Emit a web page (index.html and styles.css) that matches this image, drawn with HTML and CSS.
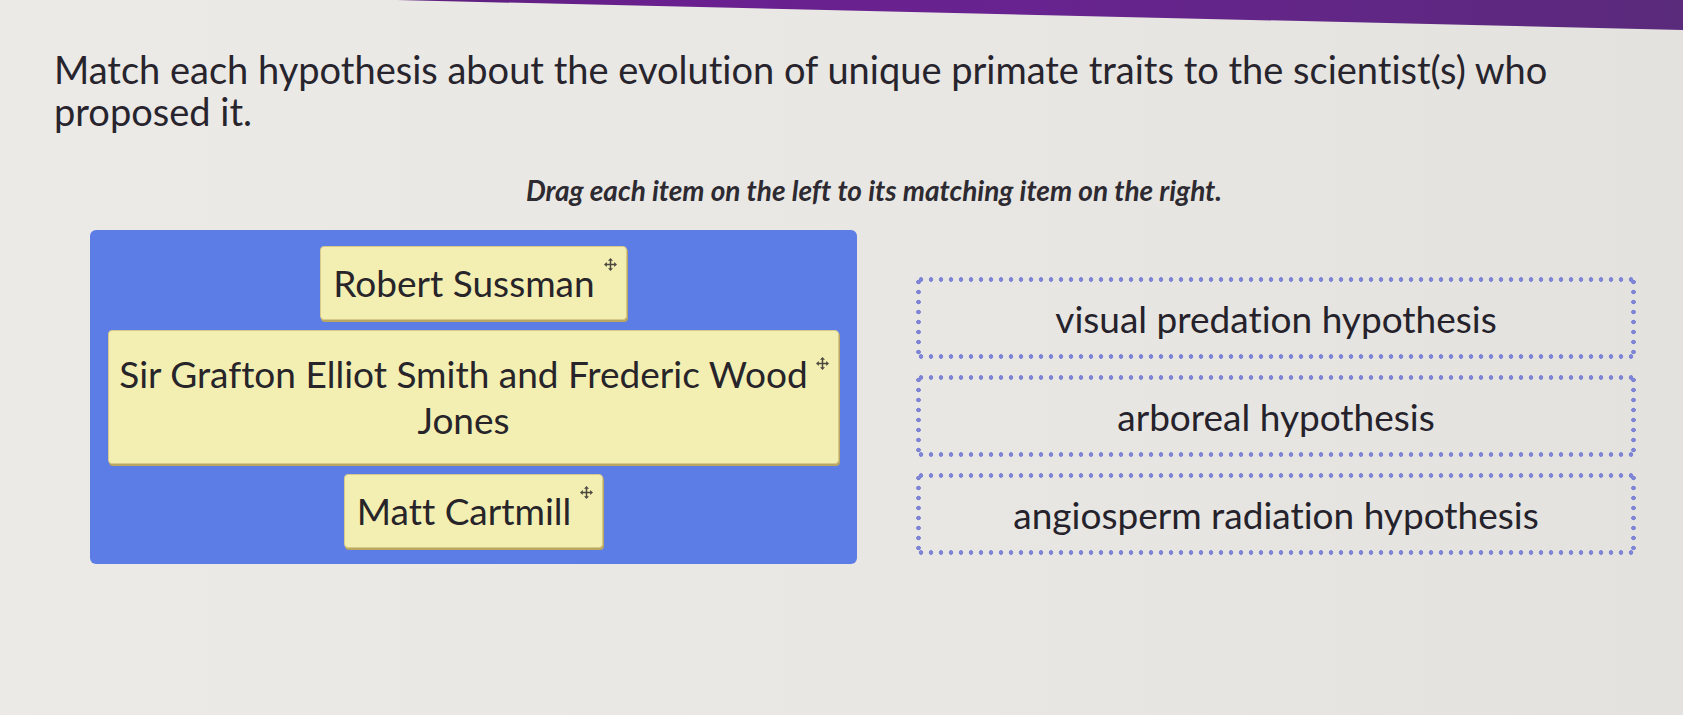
FILE: index.html
```html
<!DOCTYPE html>
<html lang="en">
<head>
<meta charset="utf-8">
<title>Match hypotheses to scientists</title>
<link rel="stylesheet" href="styles.css">
</head>
<body>
<div class="topbar"></div>
<main class="question">
  <h1 class="prompt">Match each hypothesis about the evolution of unique primate traits to the scientist(s) who proposed it.</h1>
  <p class="instruction">Drag each item on the left to its matching item on the right.</p>

  <div class="matcher">
    <div class="pool">
      <div class="card">
        <span class="card-text">Robert Sussman</span>
        <svg class="move" viewBox="0 0 12 12" aria-hidden="true"><path d="M6 0L8.3 2.6H6.7V5.3H9.4V3.7L12 6L9.4 8.3V6.7H6.7V9.4H8.3L6 12L3.7 9.4H5.3V6.7H2.6V8.3L0 6L2.6 3.7V5.3H5.3V2.6H3.7Z"/></svg>
      </div>
      <div class="card card-wide">
        <span class="card-text">Sir Grafton Elliot Smith and Frederic Wood Jones</span>
        <svg class="move" viewBox="0 0 12 12" aria-hidden="true"><path d="M6 0L8.3 2.6H6.7V5.3H9.4V3.7L12 6L9.4 8.3V6.7H6.7V9.4H8.3L6 12L3.7 9.4H5.3V6.7H2.6V8.3L0 6L2.6 3.7V5.3H5.3V2.6H3.7Z"/></svg>
      </div>
      <div class="card">
        <span class="card-text">Matt Cartmill</span>
        <svg class="move" viewBox="0 0 12 12" aria-hidden="true"><path d="M6 0L8.3 2.6H6.7V5.3H9.4V3.7L12 6L9.4 8.3V6.7H6.7V9.4H8.3L6 12L3.7 9.4H5.3V6.7H2.6V8.3L0 6L2.6 3.7V5.3H5.3V2.6H3.7Z"/></svg>
      </div>
    </div>

    <div class="targets">
      <div class="slot">visual predation hypothesis</div>
      <div class="slot">arboreal hypothesis</div>
      <div class="slot">angiosperm radiation hypothesis</div>
    </div>
  </div>
</main>
</body>
</html>
```

FILE: styles.css
```css
* {
  box-sizing: border-box;
}

html,
body {
  margin: 0;
  height: 100%;
}

body {
  background: linear-gradient(90deg, #ebeae6 0%, #e8e7e3 55%, #e3e2de 100%);
  color: #25222b;
  font-family: Lato, "Noto Sans", sans-serif;
  font-variant-ligatures: none;
  overflow: hidden;
}

/* purple site header, running off the top edge */
.topbar {
  height: 30px;
  background: linear-gradient(90deg, #4a2262 0%, #6a1f8f 40%, #682390 60%, #5a2a7b 100%);
  clip-path: polygon(23.6% 0, 100% 0, 100% 100%);
  filter: drop-shadow(0 1px 0 #3a2a40);
}

.question {
  padding: 18px 0 0 54px;
}

.prompt {
  margin: 0;
  font-size: 38px;
  line-height: 42px;
  font-weight: 400;
  color: #27242d;
  max-width: 1560px;
}

.instruction {
  margin: 42px 0 0;
  padding-left: 60px;
  text-align: center;
  max-width: 1580px;
  font-size: 28px;
  line-height: 32px;
  font-weight: 700;
  font-style: italic;
  color: #2d2a31;
}

.matcher {
  margin: 24px 0 0 36px;
  display: grid;
  grid-template-columns: 767px 720px;
  column-gap: 59px;
  align-items: start;
}

/* blue tray holding the draggable answers */
.pool {
  background: #5d7de6;
  border-radius: 6px;
  padding: 16px 18px;
  display: flex;
  flex-direction: column;
  align-items: center;
  gap: 10px;
}

.card {
  display: flex;
  align-items: flex-start;
  gap: 9px;
  padding: 13px 9px 13px 12px;
  background: #f3efb2;
  border: 1px solid #d7c98a;
  border-radius: 4px;
  box-shadow: 1px 2px 0 #b9a660;
  font-size: 37px;
  line-height: 46px;
  color: #27242a;
}

.card-wide {
  align-self: stretch;
  gap: 6px;
  padding: 20px 9px 20px 8px;
}

.card-wide .card-text {
  flex: 1;
  text-align: center;
}

.move {
  flex: none;
  width: 13px;
  height: 13px;
  margin-top: -2px;
  fill: #4b4840;
}

.card-wide .move {
  margin-top: 6px;
}

.targets {
  padding-top: 47px;
  display: flex;
  flex-direction: column;
  gap: 16px;
}

/* drop zones outlined with round dots */
.slot {
  --dot: #7f85d5;
  height: 82px;
  display: flex;
  align-items: center;
  justify-content: center;
  font-size: 37px;
  color: #25222b;
  background:
    radial-gradient(circle, var(--dot) 2px, transparent 2.6px) left top / 10px 5px repeat-x,
    radial-gradient(circle, var(--dot) 2px, transparent 2.6px) left bottom / 10px 5px repeat-x,
    radial-gradient(circle, var(--dot) 2px, transparent 2.6px) left top / 5px 10px repeat-y,
    radial-gradient(circle, var(--dot) 2px, transparent 2.6px) right top / 5px 10px repeat-y;
}
```
